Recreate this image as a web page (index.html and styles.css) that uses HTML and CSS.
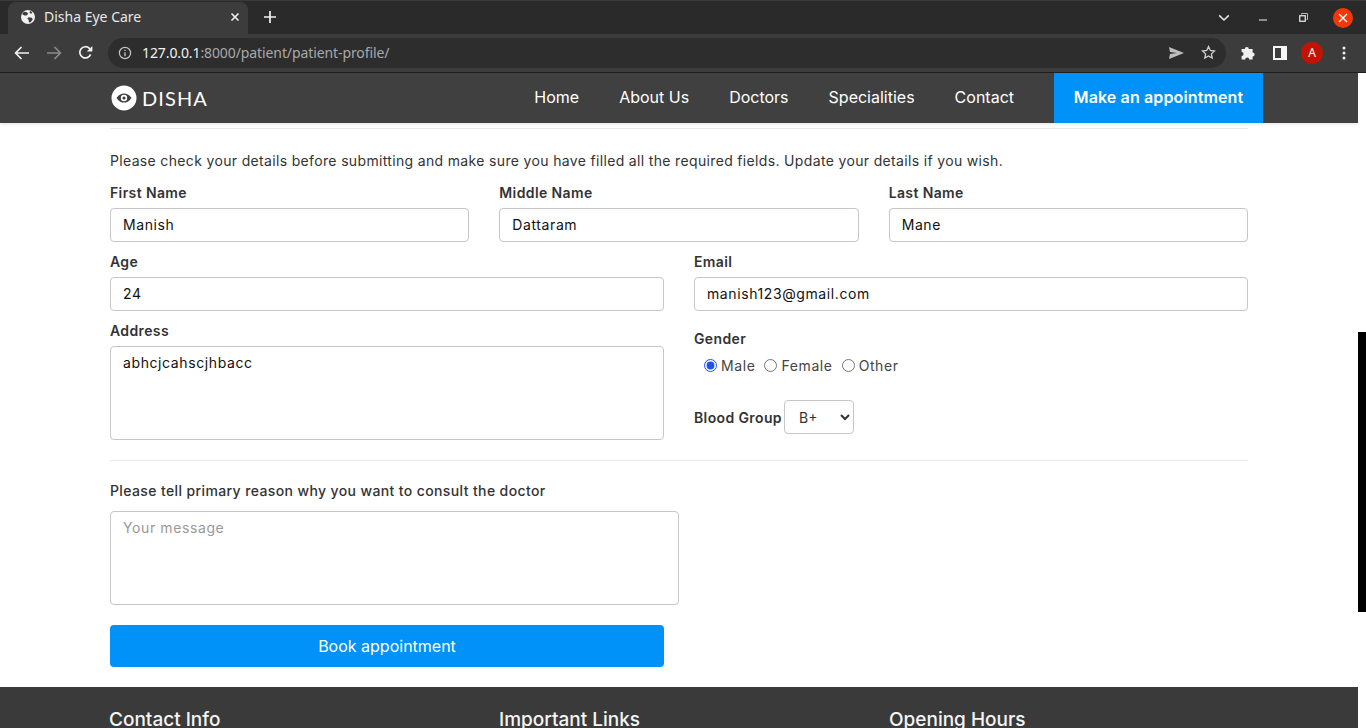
FILE: index.html
```html
<!DOCTYPE html>
<html lang="en">
<head>
<meta charset="utf-8">
<title>Disha Eye Care</title>
<link rel="stylesheet" href="styles.css">
</head>
<body>
<div class="tabstrip">
  <div class="tab">
    <svg class="tab-globe" width="16" height="16" viewBox="0 0 16 16"><circle cx="8" cy="8" r="7" fill="#f1f1f1"/><path d="M4 2.8l3 .4 1.2 1.6-1.6 1.6-2.2.2L2 5zM8.6 8.2l3 .6 1.2 1.4-2.2 3-1.6.2-.4-2.6-1.4-1.2zM10 1.8l2.4 1.8-1.2 1.2-1.6-.8z" fill="#3c3c3c"/></svg>
    <span class="tab-title">Disha Eye Care</span>
    <svg class="tab-close" width="10" height="10" viewBox="0 0 10 10"><path d="M1.5 1.5l7 7M8.5 1.5l-7 7" stroke="#f1f1f1" stroke-width="1.6"/></svg>
  </div>
  <svg class="newtab" width="14" height="14" viewBox="0 0 14 14"><path d="M7 1v12M1 7h12" stroke="#f1f1f1" stroke-width="1.7"/></svg>
  <div class="win-controls">
    <svg class="win-chevron" width="12" height="8" viewBox="0 0 12 8"><path d="M1.2 1.400L6 6l4.800-4.600" fill="none" stroke="#e8e8e8" stroke-width="1.5"/></svg>
    <svg class="win-min" width="8" height="2" viewBox="0 0 8 2"><path d="M0 1h8" stroke="#f1f1f1" stroke-width="1"/></svg>
    <svg class="win-max" width="9" height="9" viewBox="0 0 9 9"><path d="M2.500 1.500V.5h6v6h-1" fill="none" stroke="#bbb"/><rect x=".75" y="2.750" width="5.500" height="5.500" fill="none" stroke="#f1f1f1" stroke-width="1.2"/></svg>
    <span class="win-close"><svg width="10" height="10" viewBox="0 0 10 10"><path d="M1 1l8 8M9 1L1 9" stroke="#fff" stroke-width="1.4"/></svg></span>
  </div>
</div>
<div class="toolbar">
  <svg class="tb-back" width="16" height="14" viewBox="0 0 16 14"><path d="M15 7H2M7.500 1L1.600 7l5.900 6" fill="none" stroke="#f1f1f1" stroke-width="1.7"/></svg>
  <svg class="tb-fwd" width="16" height="14" viewBox="0 0 16 14"><path d="M1 7h13M8.500 1l5.900 6-5.900 6" fill="none" stroke="#8a8a8a" stroke-width="1.7"/></svg>
  <svg class="tb-reload" width="15" height="15" viewBox="0 0 15 15"><path d="M12.600 9.400A5.600 5.600 0 1 1 11.400 3.400L13 5" fill="none" stroke="#f1f1f1" stroke-width="1.7"/><path d="M14.400 1v5.600H8.800z" fill="#f1f1f1"/></svg>
  <div class="omnibox">
    <svg class="omni-info" width="14" height="14" viewBox="0 0 14 14"><circle cx="7" cy="7" r="5.600" fill="none" stroke="#c4c4c4" stroke-width="1.2"/><path d="M7 6.200v4M7 3.800v1.300" stroke="#c4c4c4" stroke-width="1.3"/></svg>
    <span class="url"><span class="url-host">127.0.0.1</span>:8000/patient/patient-profile/</span>
    <svg class="omni-send" width="15" height="12" viewBox="0 0 15 12"><path d="M0 0l15 6L0 12l1-5 7-1-7-1z" fill="#bdbdbd"/></svg>
    <svg class="omni-star" width="15" height="15" viewBox="0 0 15 15"><path d="M7.500 1.600l1.800 3.900 4.200.5-3.100 2.900.8 4.200-3.700-2.100-3.700 2.100.8-4.200L1.500 6l4.200-.5z" fill="none" stroke="#d0d0d0" stroke-width="1.3"/></svg>
  </div>
  <svg class="tb-puzzle" width="16" height="16" viewBox="0 0 16 16"><path d="M1 5h3.200a2 2 0 1 1 4 0H12v3.400a2 2 0 1 1 0 4V15.500H8.600a2 2 0 1 0-4 0H1v-3.600a2 2 0 1 0 0-4z" fill="#f1f1f1" transform="translate(.6 -1)"/></svg>
  <svg class="tb-panel" width="14" height="14" viewBox="0 0 14 14"><path d="M0 0h14v14H0zM2 2v10h6V2z" fill="#f6f6f6" fill-rule="evenodd"/></svg>
  <span class="tb-avatar">A</span>
  <svg class="tb-menu" width="4" height="14" viewBox="0 0 4 14"><circle cx="2" cy="2" r="1.500" fill="#f1f1f1"/><circle cx="2" cy="7" r="1.500" fill="#f1f1f1"/><circle cx="2" cy="12" r="1.500" fill="#f1f1f1"/></svg>
</div>
<div class="viewport">
  <div class="page">
    <header class="navbar">
      <a class="brand">
        <svg width="26" height="26" viewBox="0 0 26 26"><circle cx="13" cy="13" r="12.500" fill="#fff"/><path d="M5.500 13C8 9.400 10.500 8.400 13 8.400S18 9.400 20.500 13C18 16.600 15.500 17.600 13 17.600S8 16.600 5.500 13z" fill="#3f3f3f"/><circle cx="13" cy="13" r="3.200" fill="#fff"/><circle cx="13" cy="13" r="1.600" fill="#3f3f3f"/></svg>
        <span class="brand-name">DISHA</span>
      </a>
      <nav class="nav-links">
        <a class="nav-link">Home</a>
        <a class="nav-link">About Us</a>
        <a class="nav-link">Doctors</a>
        <a class="nav-link">Specialities</a>
        <a class="nav-link">Contact</a>
        <a class="nav-cta">Make an appointment</a>
      </nav>
    </header>
    <main class="content">
      <hr class="rule">
      <p class="intro">Please check your details before submitting and make sure you have filled all the required fields. Update your details if you wish.</p>
      <div class="grid-three">
        <div class="field"><label class="label">First Name</label><input class="control" value="Manish"></div>
        <div class="field"><label class="label">Middle Name</label><input class="control" value="Dattaram"></div>
        <div class="field"><label class="label">Last Name</label><input class="control" value="Mane"></div>
      </div>
      <div class="grid-two">
        <div>
          <div class="field"><label class="label">Age</label><input class="control" value="24"></div>
          <div class="field"><label class="label">Address</label><textarea class="control area">abhcjcahscjhbacc</textarea></div>
        </div>
        <div>
          <div class="field"><label class="label">Email</label><input class="control" value="manish123@gmail.com"></div>
          <div class="gender">
            <div class="label">Gender</div>
            <div class="radios">
              <label class="radio"><input type="radio" name="g" checked>Male</label>
              <label class="radio"><input type="radio" name="g">Female</label>
              <label class="radio"><input type="radio" name="g">Other</label>
            </div>
            <div class="blood">
              <span class="label blood-label">Blood Group</span>
              <select class="blood-select"><option>B+</option></select>
            </div>
          </div>
        </div>
      </div>
      <hr class="rule rule-mid">
      <div class="reason-label">Please tell primary reason why you want to consult the doctor</div>
      <textarea class="control area reason" placeholder="Your message"></textarea>
      <button class="submit">Book appointment</button>
    </main>
    <footer class="footer">
      <h3 class="foot-title">Contact Info</h3>
      <h3 class="foot-title">Important Links</h3>
      <h3 class="foot-title">Opening Hours</h3>
    </footer>
  </div>
  <div class="scrolltrack"><div class="scrollthumb"></div></div>
</div>
</body>
</html>
```
FILE: styles.css
```css
* { box-sizing: border-box; }
html, body { margin: 0; height: 728px; overflow: hidden; background: #fff; }
body { font-family: Inter, "Open Sans", sans-serif; color: #333; }

.tabstrip { height: 34px; background: #2a2a2a; display: flex; align-items: flex-end; border-top: 1px solid #3a3a3a; }
.tab { width: 240px; height: 32px; margin-left: 8px; background: #3c3c3c; border-radius: 8px 8px 0 0; display: flex; align-items: center; padding: 0 0 2px 12px; }
.tab-title { font: 14px "Noto Sans", sans-serif; color: #e8e8e8; margin: 0 0 2px 8px; flex: 1; }
.tab-close { margin-right: 8px; }
.newtab { margin: 0 0 10px 15px; }
.win-controls { margin-left: auto; height: 32px; display: flex; align-items: center; padding-bottom: 1px; }
.win-chevron { margin-right: 29px; }
.win-min { margin: 4px 32px 0 0; }
.win-max { margin-right: 25px; }
.win-close { width: 20px; height: 20px; border-radius: 50%; background: #f2380b; display: flex; align-items: center; justify-content: center; margin-right: 13px; }

.toolbar { height: 39px; background: #3c3c3c; border-bottom: 1px solid #1f1f1f; display: flex; align-items: center; padding: 0 0 1px 14px; }
.tb-fwd { margin-left: 16px; }
.tb-reload { margin-left: 16px; }
.omnibox { width: 1118px; height: 30px; margin-left: 15px; background: #2d2d2d; border-radius: 15px; display: flex; align-items: center; padding: 0 10px; }
.url { font: 14px "Noto Sans", sans-serif; color: #a9a9a9; margin-left: 10px; flex: 1; letter-spacing: -.1px; }
.url-host { color: #f1f1f1; }
.omni-star { margin-left: 17px; }
.tb-puzzle { margin-left: 14px; }
.tb-panel { margin-left: 17px; }
.tb-avatar { width: 22px; height: 22px; margin-left: 14px; border-radius: 50%; background: #c41200; color: #fff; font: 12px "Noto Sans", sans-serif; display: flex; align-items: center; justify-content: center; }
.tb-menu { margin-left: 19px; }

.viewport { display: flex; height: 655px; }
.page { width: 1358px; flex: none; overflow: hidden; }
.scrolltrack { width: 8px; padding-top: 259px; }
.scrollthumb { height: 280px; background: #000; }

.navbar { height: 50px; background: #404040; display: flex; align-items: center; padding: 0 95px 0 111px; box-shadow: 0 1px 3px rgba(0,0,0,.12); position: relative; }
.brand { display: flex; align-items: center; }
.brand-name { font: 400 20px Lato, sans-serif; color: #fff; margin-left: 5px; letter-spacing: 1.1px; }
.nav-links { margin-left: auto; display: flex; align-items: center; height: 50px; }
.nav-link { font-size: 16px; font-weight: 400; color: #fff; margin-right: 40px; padding-bottom: 2px; }
.nav-cta { height: 50px; width: 209px; background: #0092f8; color: #fff; font-size: 16px; font-weight: 600; letter-spacing: .13px; padding-bottom: 2px; display: flex; align-items: center; justify-content: center; }

.content { padding: 5px 110px 0; height: 564px; }
.rule { border: 0; border-top: 1px solid #e9e9e9; margin: 0; }
.intro { margin: 21px 0 0; font-size: 14px; line-height: 21px; letter-spacing: .34px; color: #333; }
.grid-three { display: grid; grid-template-columns: repeat(3, 1fr); gap: 30px; margin-top: 11px; }
.grid-two { display: grid; grid-template-columns: repeat(2, 1fr); gap: 30px; }
.field { margin-bottom: 9px; }
.label { display: block; font-size: 14px; font-weight: 600; line-height: 21px; color: #333; letter-spacing: .38px; }
.field .label { margin-bottom: 5px; }
.control { display: block; width: 100%; height: 34px; border: 1px solid #c6c6c6; border-radius: 4px; padding: 0 12px 2px; font: 14px Inter, sans-serif; color: #111; background: #fff; outline: 0; letter-spacing: .6px; }
.area { height: 94px; padding: 5px 12px; resize: none; line-height: 21px; }
.area::placeholder { color: #999; }
.gender { margin-top: 17px; }
.radios { display: flex; margin: 6px 0 0 10px; height: 21px; align-items: center; }
.radio { display: flex; align-items: center; font-size: 14px; letter-spacing: .6px; color: #444; margin-right: 9px; }
.radio input { width: 13px; height: 13px; margin: 0 4px 0 0; accent-color: #1a53f0; }
.blood { display: flex; align-items: center; margin-top: 24px; }
.blood-label { margin-right: 2px; }
.blood-select { width: 70px; height: 34px; border: 1px solid #c6c6c6; border-radius: 4px; background: #fff; font: 14px Inter, sans-serif; color: #333; padding-left: 10px; }
.rule-mid { margin-top: 11px; }
.reason-label { font-size: 14px; font-weight: 500; line-height: 21px; margin-top: 19px; color: #333; letter-spacing: .38px; }
.reason { width: 569px; margin-top: 10px; }
.submit { display: block; width: 554px; height: 42px; margin-top: 20px; border: 0; border-radius: 4px; background: #0092f8; color: #fff; font: 16px Inter, sans-serif; }

.footer { height: 41px; background: #3a3a3a; display: grid; grid-template-columns: 390px 390px 1fr; padding-left: 109px; overflow: hidden; }
.foot-title { margin: 21px 0 0; font-size: 19px; font-weight: 500; line-height: 24px; color: #f5f5f5; }
```
